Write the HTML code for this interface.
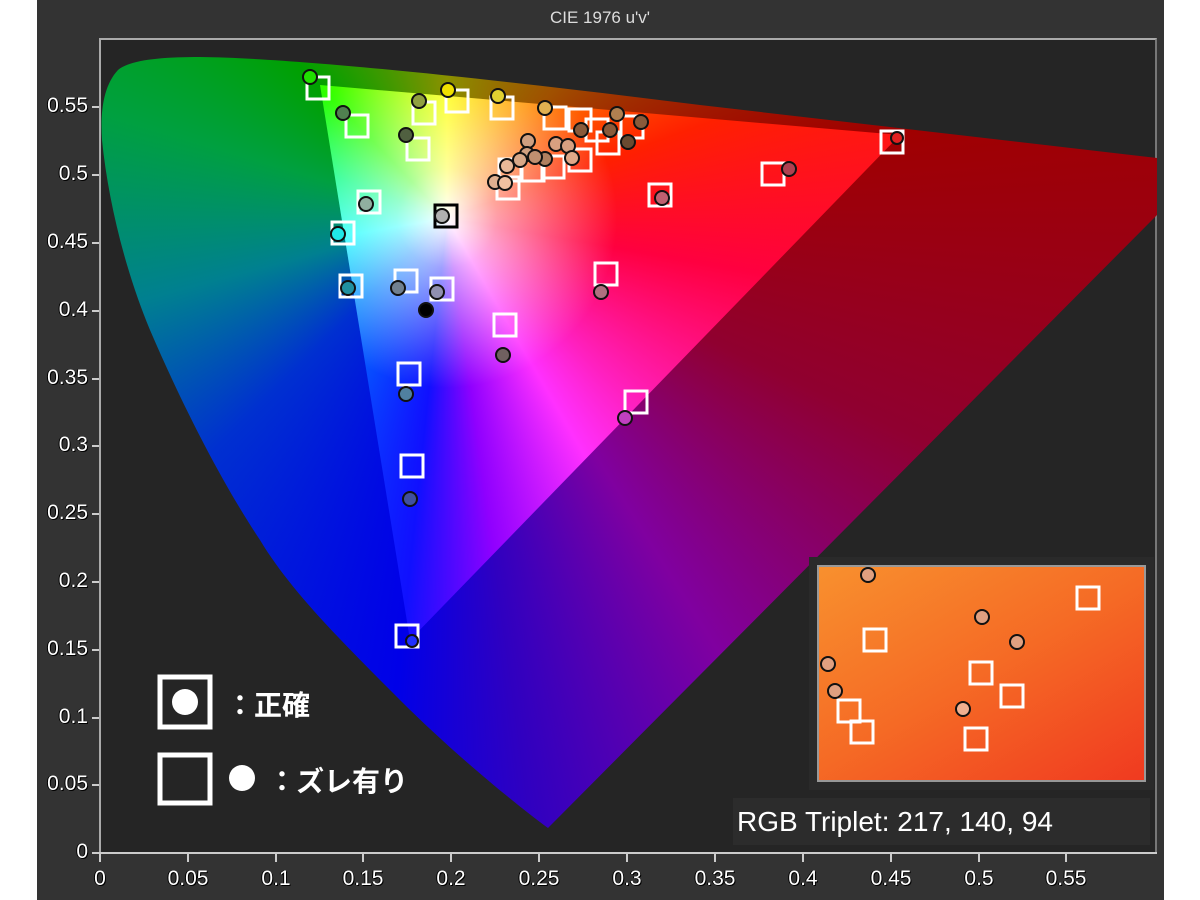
<!DOCTYPE html>
<html><head><meta charset="utf-8"><style>
*{margin:0;padding:0}
body{width:1200px;height:900px;background:#fff;position:relative;overflow:hidden;font-family:"Liberation Sans","Noto Sans CJK JP",sans-serif}
#dark{position:absolute;left:37px;top:0;width:1127px;height:900px;background:#333}
#plot{position:absolute;left:99px;top:38px;width:1058px;height:815px;background:#252525;border-left:2px solid #aaa;border-top:2px solid #aaa;border-right:2px solid #777;box-sizing:border-box}
.layer{position:absolute;left:0;top:0;width:1200px;height:900px}
#locus{clip-path:path('M548,828 C510,800 450,750 400,700 C340,640 290,590 260,540 C220,480 180,400 150,330 C125,270 108,200 102,140 C100,110 104,85 118,70 C130,60 160,57 200,57 C300,58 500,80 700,105 L1157,158 L1157,215 Z');
background:conic-gradient(from 0deg at 447px 218px,#8a9000 0deg,#a05000 40deg,#a00000 79deg,#900030 115deg,#8000a0 148deg,#3000c0 172deg,#0000e8 186deg,#0030d0 225deg,#008090 255deg,#00a040 287deg,#00a000 316deg,#8a9000 360deg)}
#tri{clip-path:polygon(320px 85px,900px 135px,410px 640px);
background:radial-gradient(circle at 447px 218px,rgba(255,255,255,1) 0px,rgba(255,255,255,.6) 50px,rgba(255,255,255,0) 170px),conic-gradient(from 0deg at 447px 218px,#ffff00 0deg,#ffa000 30deg,#ff2000 70deg,#ff0040 100deg,#ff20c0 135deg,#ff30ff 150deg,#9000ff 172deg,#1010ff 186deg,#0080ff 225deg,#00ffff 260deg,#00ff80 290deg,#30ff00 316deg,#c0ff00 345deg,#ffff00 360deg)}
#clipper{position:absolute;left:101px;top:40px;width:1056px;height:813px;overflow:hidden}
#clipper .layer{left:-101px;top:-40px}
.yl{position:absolute;right:1112px;color:#fff;font-size:21px;text-shadow:1px 1px 0 #000,-1px 0 0 #000}
.xl{position:absolute;top:867px;color:#fff;font-size:21px;width:60px;text-align:center;text-shadow:1px 1px 0 #000,-1px 0 0 #000}
#inset{position:absolute;left:817px;top:565px;width:329px;height:217px;border:2px solid #999;box-sizing:border-box;background:linear-gradient(150deg,#f8902e,#f56a25 50%,#f03a20);outline:8px solid #2a2a2a}
#trip{position:absolute;left:733px;top:798px;width:417px;height:47px;background:#2c2c2c;color:#fff;font-size:28px;line-height:47px;padding-left:4px;box-sizing:border-box}
.leg{position:absolute;color:#fff;font-weight:bold;font-size:28px}
</style></head><body>
<div id="dark"></div>
<div style="position:absolute;left:0;width:1200px;top:8px;text-align:center;color:#ddd;font-size:17px">CIE 1976 u'v'</div>
<div id="plot"></div>
<div id="clipper">
<div class="layer" id="locus"></div>
<div class="layer" id="tri"></div>
</div>
<div id="inset"></div>
<div id="trip">RGB Triplet: 217, 140, 94</div>
<svg class="layer" width="1200" height="900" style="position:absolute;left:0;top:0">
<g stroke="#ccc" stroke-width="2">
<line x1="92" y1="107" x2="99" y2="107"/><line x1="92" y1="175" x2="99" y2="175"/><line x1="92" y1="243" x2="99" y2="243"/><line x1="92" y1="311" x2="99" y2="311"/><line x1="92" y1="379" x2="99" y2="379"/><line x1="92" y1="446" x2="99" y2="446"/><line x1="92" y1="514" x2="99" y2="514"/><line x1="92" y1="582" x2="99" y2="582"/><line x1="92" y1="650" x2="99" y2="650"/><line x1="92" y1="718" x2="99" y2="718"/><line x1="92" y1="785" x2="99" y2="785"/><line x1="92" y1="853" x2="99" y2="853"/>
<line x1="99" y1="853" x2="1157" y2="853"/>
<line x1="100" y1="853" x2="100" y2="862"/><line x1="188" y1="853" x2="188" y2="862"/><line x1="276" y1="853" x2="276" y2="862"/><line x1="363" y1="853" x2="363" y2="862"/><line x1="451" y1="853" x2="451" y2="862"/><line x1="539" y1="853" x2="539" y2="862"/><line x1="627" y1="853" x2="627" y2="862"/><line x1="715" y1="853" x2="715" y2="862"/><line x1="803" y1="853" x2="803" y2="862"/><line x1="891" y1="853" x2="891" y2="862"/><line x1="979" y1="853" x2="979" y2="862"/><line x1="1066" y1="853" x2="1066" y2="862"/>
</g>
<g fill="none" stroke="#fff" stroke-width="3">
<rect x="307" y="77" width="22" height="22"/><rect x="346" y="115" width="22" height="22"/><rect x="413" y="102" width="22" height="22"/><rect x="446" y="90" width="22" height="22"/><rect x="491" y="97" width="22" height="22"/><rect x="544" y="107" width="22" height="22"/><rect x="407" y="138" width="22" height="22"/><rect x="358" y="191" width="22" height="22"/><rect x="332" y="222" width="22" height="22"/><rect x="340" y="275" width="22" height="22"/><rect x="395" y="270" width="22" height="22"/><rect x="431" y="278" width="22" height="22"/><rect x="494" y="314" width="22" height="22"/><rect x="398" y="363" width="22" height="22"/><rect x="401" y="455" width="22" height="22"/><rect x="396" y="625" width="22" height="22"/><rect x="595" y="263" width="22" height="22"/><rect x="625" y="391" width="22" height="22"/><rect x="649" y="184" width="22" height="22"/><rect x="762" y="163" width="22" height="22"/><rect x="881" y="131" width="22" height="22"/>
<rect x="569" y="109" width="22" height="22"/><rect x="597" y="132" width="22" height="22"/><rect x="621" y="116" width="22" height="22"/><rect x="569" y="149" width="22" height="22"/><rect x="542" y="156" width="22" height="22"/><rect x="522" y="159" width="22" height="22"/><rect x="499" y="159" width="22" height="22"/><rect x="497" y="177" width="22" height="22"/><rect x="586" y="119" width="22" height="22"/>
<rect x="1077" y="587" width="22" height="22"/><rect x="864" y="629" width="22" height="22"/><rect x="970" y="662" width="22" height="22"/><rect x="1001" y="685" width="22" height="22"/><rect x="838" y="700" width="22" height="22"/><rect x="851" y="721" width="22" height="22"/><rect x="965" y="728" width="22" height="22"/>
</g>
<rect x="435" y="205" width="22" height="22" fill="none" stroke="#000" stroke-width="3"/>
<g stroke="#111" stroke-width="2">
<circle cx="310" cy="77" r="7" fill="#20e000"/><circle cx="343" cy="113" r="7" fill="#508050"/><circle cx="419" cy="101" r="7" fill="#90a040"/><circle cx="448" cy="90" r="7" fill="#f0e000"/><circle cx="498" cy="96" r="7" fill="#e0d030"/><circle cx="545" cy="108" r="7" fill="#e0b050"/><circle cx="406" cy="135" r="7" fill="#506040"/>
<circle cx="617" cy="114" r="7" fill="#b08050"/><circle cx="641" cy="122" r="7" fill="#8a5a3a"/><circle cx="581" cy="130" r="7" fill="#8a5a3a"/><circle cx="610" cy="130" r="7" fill="#8a5a3a"/><circle cx="628" cy="142" r="7" fill="#6a4a30"/>
<circle cx="528" cy="141" r="7" fill="#d0a080"/><circle cx="556" cy="144" r="7" fill="#d8a080"/><circle cx="568" cy="146" r="7" fill="#d8a080"/><circle cx="572" cy="158" r="7" fill="#e0a888"/><circle cx="545" cy="159" r="7" fill="#b08060"/><circle cx="527" cy="154" r="7" fill="#d0a080"/><circle cx="535" cy="157" r="7" fill="#c09070"/><circle cx="520" cy="160" r="7" fill="#d8a888"/><circle cx="507" cy="166" r="7" fill="#e8b898"/><circle cx="495" cy="182" r="7" fill="#e0b090"/><circle cx="505" cy="183" r="7" fill="#f0c0a0"/>
<circle cx="366" cy="204" r="7" fill="#90b0a0"/><circle cx="338" cy="234" r="7" fill="#20e8e8"/><circle cx="442" cy="216" r="7" fill="#b0b0b0"/><circle cx="662" cy="198" r="7" fill="#c06070"/><circle cx="789" cy="169" r="7" fill="#b04050"/><circle cx="897" cy="138" r="6" fill="#e02020"/>
<circle cx="348" cy="288" r="7" fill="#2090a0"/><circle cx="398" cy="288" r="7" fill="#708090"/><circle cx="437" cy="292" r="7" fill="#9090b0"/><circle cx="426" cy="310" r="7" fill="#000"/><circle cx="601" cy="292" r="7" fill="#b07080"/>
<circle cx="503" cy="355" r="7" fill="#706060"/><circle cx="406" cy="394" r="7" fill="#5080a0"/><circle cx="410" cy="499" r="7" fill="#4050a0"/><circle cx="412" cy="641" r="6" fill="#2030ff"/><circle cx="625" cy="418" r="7" fill="#c040c0"/>
<circle cx="868" cy="575" r="7" fill="#e0a080"/><circle cx="982" cy="617" r="7" fill="#e0a080"/><circle cx="1017" cy="642" r="7" fill="#e0a080"/><circle cx="828" cy="664" r="7" fill="#e0a080"/><circle cx="835" cy="691" r="7" fill="#e0a080"/><circle cx="963" cy="709" r="7" fill="#f0b090"/>
</g>
<rect x="160" y="677" width="50" height="50" fill="none" stroke="#fff" stroke-width="5"/>
<circle cx="185" cy="702" r="13" fill="#fff"/>
<rect x="160" y="755" width="50" height="48" fill="none" stroke="#fff" stroke-width="5"/>
<circle cx="242" cy="778" r="13" fill="#fff"/>
</svg>
<div class="leg" style="left:226px;top:684px">：正確</div>
<div class="leg" style="left:268px;top:760px">：ズレ有り</div>
<div class="yl" style="top:94px">0.55</div><div class="yl" style="top:162px">0.5</div><div class="yl" style="top:230px">0.45</div><div class="yl" style="top:298px">0.4</div><div class="yl" style="top:366px">0.35</div><div class="yl" style="top:433px">0.3</div><div class="yl" style="top:501px">0.25</div><div class="yl" style="top:569px">0.2</div><div class="yl" style="top:637px">0.15</div><div class="yl" style="top:705px">0.1</div><div class="yl" style="top:772px">0.05</div><div class="yl" style="top:840px">0</div>
<div class="xl" style="left:70px">0</div><div class="xl" style="left:158px">0.05</div><div class="xl" style="left:246px">0.1</div><div class="xl" style="left:333px">0.15</div><div class="xl" style="left:421px">0.2</div><div class="xl" style="left:509px">0.25</div><div class="xl" style="left:597px">0.3</div><div class="xl" style="left:685px">0.35</div><div class="xl" style="left:773px">0.4</div><div class="xl" style="left:861px">0.45</div><div class="xl" style="left:949px">0.5</div><div class="xl" style="left:1036px">0.55</div>
</body></html>
